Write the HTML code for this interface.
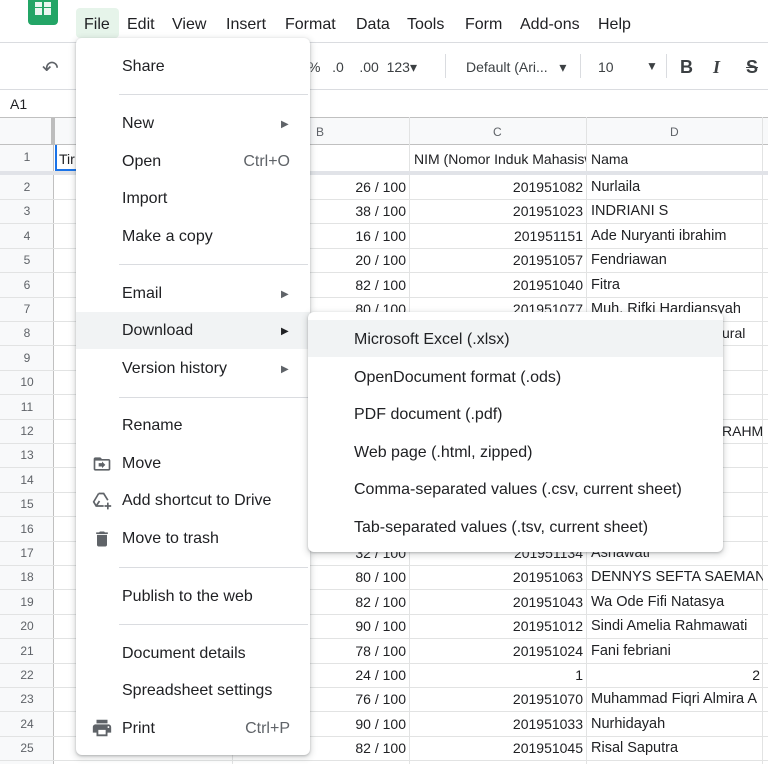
<!DOCTYPE html>
<html><head><meta charset="utf-8"><style>
*{margin:0;padding:0;box-sizing:border-box}
html,body{width:768px;height:764px;overflow:hidden}
body{background:#fff;font-family:"Liberation Sans",Arial,sans-serif;color:#202124;position:relative}
.a{position:absolute;white-space:nowrap}
.mb{top:16px;font-size:16px;color:#202124}
.rn{position:absolute;left:0;width:54px;text-align:center;font-size:12px;color:#5f6368}
.cell{position:absolute;font-size:14px;color:#202124;white-space:nowrap;overflow:hidden}
.menu{position:absolute;background:#fff;border-radius:6px;box-shadow:0 2px 6px 2px rgba(60,64,67,.15),0 1px 2px rgba(60,64,67,.3)}
.mi{position:absolute;left:46px;font-size:16px;color:#202124;white-space:nowrap}
.sc{position:absolute;right:20px;font-size:16px;color:#5f6368}
.ar{position:absolute;left:205px;font-size:10px;color:#5f6368}
.sep{position:absolute;left:43px;right:2px;height:1px;background:#dadce0}
.si{position:absolute;left:46px;font-size:16px;color:#202124;white-space:nowrap}
</style></head><body>
<div class="a" style="left:28px;top:-6px;width:30px;height:31px;background:#23a566;border-radius:4px"></div>
<div class="a" style="left:35px;top:2px;width:16px;height:13px;background:#fff;opacity:.9"></div>
<div class="a" style="left:35px;top:7px;width:16px;height:1px;background:#23a566"></div>
<div class="a" style="left:42px;top:2px;width:2px;height:13px;background:#23a566"></div>
<div class="a" style="left:76px;top:8px;width:43px;height:30px;background:#e6f4ea;border-radius:4px"></div>
<div class="a mb" style="left:84px">File</div>
<div class="a mb" style="left:127px">Edit</div>
<div class="a mb" style="left:172px">View</div>
<div class="a mb" style="left:226px">Insert</div>
<div class="a mb" style="left:285px">Format</div>
<div class="a mb" style="left:356px">Data</div>
<div class="a mb" style="left:407px">Tools</div>
<div class="a mb" style="left:465px">Form</div>
<div class="a mb" style="left:520px">Add-ons</div>
<div class="a mb" style="left:598px">Help</div>
<div class="a" style="left:0;top:42px;width:768px;height:1px;background:#dadce0"></div>
<div class="a" style="left:42px;top:56px;font-size:20px;color:#5f6368">&#8630;</div>
<div class="a" style="left:308px;top:59px;font-size:14px;color:#3c4043">%&nbsp;&nbsp;&nbsp;.0&nbsp;&nbsp;&nbsp;&nbsp;.00&nbsp;&nbsp;123&#9662;</div>
<div class="a" style="left:445px;top:54px;width:1px;height:24px;background:#dadce0"></div>
<div class="a" style="left:466px;top:59px;font-size:14px;color:#3c4043">Default (Ari...&nbsp;&nbsp;&nbsp;&#9662;</div>
<div class="a" style="left:580px;top:54px;width:1px;height:24px;background:#dadce0"></div>
<div class="a" style="left:598px;top:59px;font-size:14px;color:#3c4043">10</div>
<div class="a" style="left:646px;top:59px;font-size:12px;color:#3c4043">&#9660;</div>
<div class="a" style="left:666px;top:54px;width:1px;height:24px;background:#dadce0"></div>
<div class="a" style="left:680px;top:57px;font-size:18px;font-weight:bold;color:#3c4043">B</div>
<div class="a" style="left:713px;top:57px;font-size:18px;font-style:italic;color:#3c4043;font-family:'Liberation Serif',serif;font-weight:bold">I</div>
<div class="a" style="left:746px;top:57px;font-size:18px;color:#3c4043;text-decoration:line-through;font-weight:bold">S</div>
<div class="a" style="left:0;top:89px;width:768px;height:1px;background:#dadce0"></div>
<div class="a" style="left:10px;top:96px;font-size:14px">A1</div>
<div class="a" style="left:0;top:117px;width:768px;height:28px;background:#f8f9fa;border-top:1px solid #c0c0c0;border-bottom:1px solid #c0c0c0"></div>
<div class="a" style="left:0;top:145px;width:54px;height:619px;background:#f8f9fa;border-right:1px solid #c0c0c0"></div>
<div class="a" style="left:51px;top:118px;width:4px;height:27px;background:#bdbdbd"></div>
<div class="a" style="left:232px;top:117px;width:1px;height:647px;background:#e2e3e3"></div>
<div class="a" style="left:409px;top:117px;width:1px;height:647px;background:#e2e3e3"></div>
<div class="a" style="left:586px;top:117px;width:1px;height:647px;background:#e2e3e3"></div>
<div class="a" style="left:762px;top:117px;width:1px;height:647px;background:#e2e3e3"></div>
<div class="a" style="left:316px;top:125px;font-size:12px;color:#5f6368">B</div>
<div class="a" style="left:493px;top:125px;font-size:12px;color:#5f6368">C</div>
<div class="a" style="left:670px;top:125px;font-size:12px;color:#5f6368">D</div>
<div class="a" style="left:0;top:171px;width:768px;height:4px;background:#e1e3e8"></div>
<div class="a" style="left:55px;top:145px;height:26px;border-left:2px solid #1a73e8;border-bottom:2px solid #1a73e8;width:40px"></div>
<div class="rn" style="top:150px">1</div>
<div class="cell" style="left:59px;top:151px">Tir</div>
<div class="cell" style="left:414px;top:151px;width:172px">NIM (Nomor Induk Mahasiswa)</div>
<div class="cell" style="left:591px;top:151px">Nama</div>
<div id="rows"></div>
<script>
var d={2:["26","201951082","Nurlaila"],3:["38","201951023","INDRIANI S"],4:["16","201951151","Ade Nuryanti ibrahim"],5:["20","201951057","Fendriawan"],6:["82","201951040","Fitra"],7:["80","201951077","Muh. Rifki Hardiansyah"],17:["32","201951134","Ashawati"],18:["80","201951063","DENNYS SEFTA SAEMAN"],19:["82","201951043","Wa Ode Fifi Natasya"],20:["90","201951012","Sindi Amelia Rahmawati"],21:["78","201951024","Fani febriani"],22:["24","1",""],23:["76","201951070","Muhammad Fiqri Almira A"],24:["90","201951033","Nurhidayah"],25:["82","201951045","Risal Saputra"]};
var h="";
for(var n=2;n<=26;n++){var t=175+(n-2)*24.4;
h+='<div class="a" style="left:0;top:'+(t+24)+'px;width:768px;height:1px;background:#e2e3e3"></div>';
if(n<=25)h+='<div class="rn" style="top:'+(t+5)+'px">'+n+'</div>';
var r=d[n];if(r){h+='<div class="cell" style="left:233px;width:173px;text-align:right;top:'+(t+4)+'px">'+r[0]+' / 100</div>';
h+='<div class="cell" style="left:410px;width:173px;text-align:right;top:'+(t+4)+'px">'+r[1]+'</div>';
h+='<div class="cell" style="left:591px;width:172px;top:'+(t+4)+'px;font-size:14.5px">'+r[2]+'</div>';}}
h+='<div class="cell" style="left:590px;width:170px;text-align:right;top:'+(175+20*24.4+4)+'px">2</div>';
h+='<div class="cell" style="left:722px;top:'+(175+6*24.4+4)+'px">ural</div>';
h+='<div class="cell" style="left:722px;top:'+(175+10*24.4+4)+'px">RAHM</div>';
document.getElementById("rows").innerHTML=h;
</script>
<div class="menu" style="left:76px;top:38px;width:234px;height:717px">
<div class="mi" style="top:20px">Share</div>
<div class="sep" style="top:56px"></div>
<div class="mi" style="top:77px">New</div><div class="ar" style="top:81px">&#9654;</div>
<div class="mi" style="top:115px">Open</div><div class="sc" style="top:115px">Ctrl+O</div>
<div class="mi" style="top:152px">Import</div>
<div class="mi" style="top:190px">Make a copy</div>
<div class="sep" style="top:226px"></div>
<div class="mi" style="top:247px">Email</div><div class="ar" style="top:251px">&#9654;</div>
<div style="position:absolute;left:0;top:274px;width:234px;height:37px;background:#f1f3f4"></div>
<div class="mi" style="top:284px">Download</div><div class="ar" style="top:288px;color:#202124">&#9654;</div>
<div class="mi" style="top:322px">Version history</div><div class="ar" style="top:326px">&#9654;</div>
<div class="sep" style="top:359px"></div>
<div class="mi" style="top:379px">Rename</div>
<svg style="position:absolute;left:16px;top:416px" width="20" height="20" viewBox="0 0 24 24"><path fill="#5f6368" d="M20 6h-8l-2-2H4c-1.1 0-2 .9-2 2v12c0 1.1.9 2 2 2h16c1.1 0 2-.9 2-2V8c0-1.1-.9-2-2-2zm0 12H4V8h16v10zm-8-7V9l4 4-4 4v-2H8v-4h4z"/></svg>
<div class="mi" style="top:417px">Move</div>
<svg style="position:absolute;left:16px;top:453px" width="20" height="20" viewBox="0 0 24 24"><path fill="none" stroke="#5f6368" stroke-width="2" d="M8 3h6l5 8 M8 3l-6 10 3 5h9 M5 18l4-6"/><path stroke="#5f6368" stroke-width="2" d="M19 14v8M15 18h8"/></svg>
<div class="mi" style="top:454px">Add shortcut to Drive</div>
<svg style="position:absolute;left:16px;top:491px" width="20" height="20" viewBox="0 0 24 24"><path fill="#5f6368" d="M6 19c0 1.1.9 2 2 2h8c1.1 0 2-.9 2-2V7H6v12zM19 4h-3.5l-1-1h-5l-1 1H5v2h14V4z"/></svg>
<div class="mi" style="top:492px">Move to trash</div>
<div class="sep" style="top:529px"></div>
<div class="mi" style="top:550px">Publish to the web</div>
<div class="sep" style="top:586px"></div>
<div class="mi" style="top:607px">Document details</div>
<div class="mi" style="top:644px">Spreadsheet settings</div>
<svg style="position:absolute;left:15px;top:679px" width="22" height="22" viewBox="0 0 24 24"><path fill="#5f6368" d="M19 8H5c-1.66 0-3 1.34-3 3v6h4v4h12v-4h4v-6c0-1.66-1.34-3-3-3zm-3 11H8v-5h8v5zm3-7c-.55 0-1-.45-1-1s.45-1 1-1 1 .45 1 1-.45 1-1 1zm-1-9H6v4h12V3z"/></svg>
<div class="mi" style="top:682px">Print</div><div class="sc" style="top:682px">Ctrl+P</div>
</div>
<div class="menu" style="left:308px;top:312px;width:415px;height:240px">
<div style="position:absolute;left:0;top:8px;width:415px;height:37px;background:#f1f3f4"></div>
<div class="si" style="top:19px">Microsoft Excel (.xlsx)</div>
<div class="si" style="top:57px">OpenDocument format (.ods)</div>
<div class="si" style="top:94px">PDF document (.pdf)</div>
<div class="si" style="top:132px">Web page (.html, zipped)</div>
<div class="si" style="top:169px">Comma-separated values (.csv, current sheet)</div>
<div class="si" style="top:207px">Tab-separated values (.tsv, current sheet)</div>
</div>
</body></html>
